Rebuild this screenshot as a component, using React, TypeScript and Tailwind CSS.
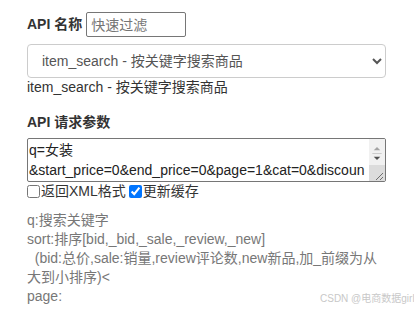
import React from 'react';

const font = { fontFamily: '"Liberation Sans", Arial, "Noto Sans CJK SC", sans-serif' };

const params =
  'q=女装&start_price=0&end_price=0&page=1&cat=0&discount_only=&sort=&page_size=&seller_info=&nick=&ppath=&imgid=&filter=';

// classic textarea scrollbar, drawn over the right edge of the textarea
function FakeScrollbar() {
  return (
    <div className="absolute right-[1px] top-[1px] bottom-[1px] w-[16px] bg-[#f1f1f1] flex flex-col items-center rounded-tr-[1px]">
      <svg width="16" height="26" viewBox="0 0 16 26" className="mt-[2px]">
        <path d="M4.5 10 L8 6.5 L11.5 10 Z" fill="#a3a3a3" />
        <rect x="3" y="13" width="10" height="1" fill="#c8c8c8" />
        <path d="M4.5 17 L8 20.5 L11.5 17 Z" fill="#505050" />
      </svg>
      <div className="mt-auto w-[16px] h-[17px] bg-[#dcdcdc] relative">
        <svg width="16" height="17" viewBox="0 0 16 17" className="absolute inset-0">
          <path d="M14 8 L7 15 M14 12 L11 15" stroke="#6e6e6e" strokeWidth="1" />
        </svg>
      </div>
    </div>
  );
}

export default function App() {
  return (
    <div className="relative w-[414px] h-[314px] overflow-hidden bg-white text-[14px] text-[#333]" style={font}>
      <div className="ml-[27px] w-[359px] pt-[12px]">
        {/* API 名称 */}
        <div className="flex items-center h-[25px]">
          <label className="font-bold mr-[4px]">API 名称</label>
          <input
            className="w-[100px] h-[25px] border border-[#767676] rounded-[2px] px-[4px] text-[14px] placeholder:text-[#757575] outline-none"
            placeholder="快速过滤"
          />
        </div>

        <select
          className="mt-[7px] block w-full h-[34px] border border-[#ccc] rounded-[4px] pl-[10px] pr-[8px] text-[14px] text-[#555] bg-white"
          defaultValue="item_search"
        >
          <option value="item_search">item_search - 按关键字搜索商品</option>
        </select>

        <div className="leading-[19px]">item_search - 按关键字搜索商品</div>

        {/* API 请求参数 */}
        <div className="font-bold mt-[16px] leading-[19px]">API 请求参数</div>
        <div className="relative mt-[6px]">
          <textarea
            className="block w-full h-[44px] border border-[#767676] rounded-[2px] pl-[1px] pr-[18px] py-[1px] text-[14px] leading-[20px] text-[#222] overflow-hidden resize-none outline-none"
            defaultValue={params}
          />
          <FakeScrollbar />
        </div>

        <div className="flex items-center h-[19px] leading-[19px]">
          <input type="checkbox" className="w-[13px] h-[13px] m-0 mr-[1px]" />
          <span>返回XML格式</span>
          <input type="checkbox" defaultChecked className="w-[13px] h-[13px] ml-[3px] mr-[1px] accent-[#0075ff]" />
          <span>更新缓存</span>
        </div>

        <div className="mt-[10px] text-[#777] leading-[19px]">
          <div>q:搜索关键字</div>
          <div>sort:排序[bid,_bid,_sale,_review,_new]</div>
          <div>&nbsp;&nbsp;(bid:总价,sale:销量,review评论数,new新品,加_前缀为从大到小排序)&lt;</div>
          <div>page:</div>
        </div>
      </div>

      <div className="absolute left-[320px] top-[291px] text-[10px] text-[#c8c8c8] whitespace-nowrap">
        CSDN @电商数据girl
      </div>
    </div>
  );
}
